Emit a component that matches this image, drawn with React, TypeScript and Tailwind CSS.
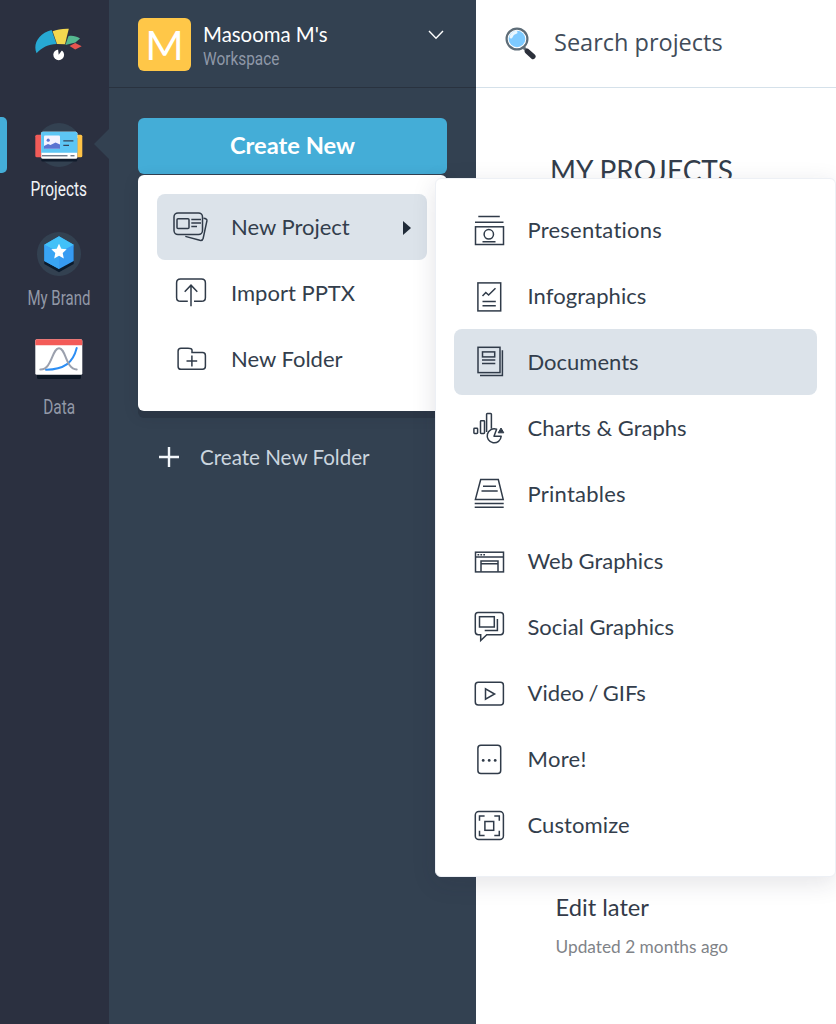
import React from "react";

type IconProps = { children: React.ReactNode };

function LineIcon({ children }: IconProps) {
  return (
    <svg viewBox="0 0 36 36" className="size-9 shrink-0 overflow-visible" fill="none" stroke="#303b49" strokeWidth="1.5">
      {children}
    </svg>
  );
}

const projectTypes: { label: string; active?: boolean; spacing?: string; icon: React.ReactNode }[] = [
  {
    label: "Presentations",
    spacing: "tracking-[0.22px]",
    icon: (
      <>
        <path d="M7.3 4.5H28.8M4 10.2H32.5M11.5 29.7H24.5" />
        <rect x="4.5" y="14.8" width="28" height="17.7" />
        <circle cx="17.8" cy="22.3" r="4.7" />
      </>
    ),
  },
  {
    label: "Infographics",
    spacing: "tracking-[0.08px]",
    icon: (
      <>
        <rect x="6.9" y="4.9" width="22.8" height="28" />
        <path d="M11.5 18L14.8 14.5L17.6 17L24.5 10.3M11.5 23.4H24.8M11.5 27.7H24.8" />
      </>
    ),
  },
  {
    label: "Documents",
    active: true,
    icon: (
      <>
        <rect x="7" y="3.3" width="22" height="25.3" />
        <rect x="11.5" y="7.9" width="12.2" height="5" />
        <path d="M11 16.1H24.3M11 19.6H24.3M31.4 6.3V31.6H9" />
      </>
    ),
  },
  {
    label: "Charts & Graphs",
    icon: (
      <>
        <rect x="2.9" y="18.3" width="3.7" height="5.2" rx="0.7" />
        <rect x="9.5" y="10.8" width="4" height="12.7" rx="0.7" />
        <path d="M15.6 22V4.3Q15.6 3.5 16.4 3.5H19.6Q20.4 3.5 20.4 4.3V18.7" />
        <path d="M25.6 19.2A7 7 0 1 0 30.2 26.3H23L25.6 19.2Z" strokeLinejoin="round" />
        <path d="M30 18L27.2 22.8H32.8Z" fill="#303b49" strokeWidth="1" />
      </>
    ),
  },
  {
    label: "Printables",
    spacing: "tracking-[0.25px]",
    icon: (
      <path d="M9.7 3.6H27.3L32.2 23.4H4.4ZM12 10.3H25M10.5 14.9H26.7M3.7 27.4H32.7M3.7 31.2H32.7" />
    ),
  },
  {
    label: "Web Graphics",
    icon: (
      <>
        <rect x="4.5" y="9.2" width="28" height="19.7" />
        <path d="M4.5 14.1H32.5M10 28.8V18.1H27V28.8M10 20.7H27" />
        <path d="M6.5 11.8H14" strokeDasharray="1.7 1.2" strokeWidth="1.4" />
      </>
    ),
  },
  {
    label: "Social Graphics",
    icon: (
      <>
        <path d="M7 3.4H29.5Q32.4 3.4 32.4 6.3V22.8Q32.4 25.7 29.5 25.7H15.8L9.7 31.6V25.7H7.2Q4.3 25.7 4.3 22.8V6.3Q4.3 3.4 7 3.4Z" />
        <rect x="8.5" y="7.7" width="14.8" height="10.3" />
        <path d="M26.4 10V21.6H13.7" />
      </>
    ),
  },
  {
    label: "Video / GIFs",
    spacing: "[word-spacing:-1.3px]",
    icon: (
      <>
        <rect x="4.3" y="7.2" width="28.1" height="22.7" rx="3" />
        <path d="M14.5 13.8V24.2L23.6 19Z" />
      </>
    ),
  },
  {
    label: "More!",
    spacing: "tracking-[0.3px]",
    icon: (
      <>
        <rect x="6.9" y="4.3" width="22.8" height="28.2" rx="3" />
        <g fill="#303b49" stroke="none">
          <circle cx="12.2" cy="19.4" r="1.4" />
          <circle cx="18.2" cy="19.4" r="1.4" />
          <circle cx="24.2" cy="19.4" r="1.4" />
        </g>
      </>
    ),
  },
  {
    label: "Customize",
    spacing: "tracking-[0.1px]",
    icon: (
      <>
        <rect x="4.3" y="4.5" width="28.1" height="28" rx="3.5" />
        <rect x="13.9" y="14.5" width="8.8" height="8.8" />
        <path d="M8.5 13.8V9H13.6M23.3 9H28.3V13.8M28.3 23.8V28.6H23.3M13.6 28.6H8.5V23.8" />
      </>
    ),
  },
];

function Logo() {
  return (
    <svg viewBox="0 0 50 36" className="h-9 w-[50px]">
      <path d="M2.6 25.2C-1.5 16.5 4.5 5 17.6 1.9L22.6 15.9C14.5 16.2 7.5 19.4 2.6 25.2Z" fill="#27a9d3" />
      <path d="M18.6 3.2C23 1.6 28 .6 34.8 .8L31 16.3L23 15.9Z" fill="#f3d84f" />
      <path d="M34.4 8.2C38 7.1 42.5 8.5 46 10.4L41.4 14.5L31.4 17Z" fill="#55b890" />
      <path d="M35.6 18L41.2 14.9L47.7 18.2L41.2 21.6Z" fill="#e8554f" />
      <circle cx="24.7" cy="26.8" r="5.4" fill="#fff" />
      <path d="M24.7 26.8L24 20.4L28.2 22Z" fill="#2b3040" />
    </svg>
  );
}

function ProjectsIcon() {
  return (
    <svg viewBox="0 0 50 44" className="h-11 w-[50px]">
      <circle cx="25" cy="22" r="22" fill="#334151" />
      <rect x="1.3" y="11.8" width="8" height="22.4" rx="1.5" fill="#f15b58" />
      <rect x="40.7" y="11.8" width="7.6" height="22.4" rx="1.5" fill="#ffc346" />
      <rect x="7.2" y="14" width="36.1" height="24.5" rx="1.5" fill="#101b2b" />
      <rect x="7.2" y="8.8" width="36.1" height="27" rx="1.5" fill="#fff" />
      <path d="M7.2 10.3Q7.2 8.8 8.7 8.8H41.8Q43.3 8.8 43.3 10.3V29.7H7.2Z" fill="#5dc6f5" />
      <rect x="10" y="12.6" width="16" height="13.2" rx="1" fill="#f4f3ff" />
      <circle cx="14.2" cy="17.2" r="1.6" fill="#5b74d1" />
      <path d="M10 23L14 21L16.5 22L21.5 19.5L26 21.5V25.8H10Z" fill="#5b74d1" />
      <path d="M29.3 17.9H39.4M29.3 22.3H35" stroke="#35445a" strokeWidth="1.2" />
      <path d="M8 32.8H33.5M36.5 32.8H40.5" stroke="#35445a" strokeWidth="1" />
    </svg>
  );
}

function BrandIcon() {
  return (
    <svg viewBox="0 0 50 44" className="h-11 w-[50px]">
      <circle cx="25" cy="22" r="22" fill="#334151" />
      <path d="M10.3 15L25 7L39.7 15V32L25 40.3L10.3 32Z" fill="#0b1b2c" />
      <path d="M25 4.3L39.7 12.7V29L25 37L10.3 29V12.7Z" fill="#369bf2" />
      <path d="M25 4.3L39.7 12.7L25 20.6L10.3 12.7Z" fill="#42c1f8" />
      <path d="M10.3 12.7L25 20.6V37L10.3 29Z" fill="#39a5f4" />
      <path d="M25 11.7L27.3 16.7L32.7 17.3L28.7 21L29.8 26.4L25 23.7L20.2 26.4L21.3 21L17.3 17.3L22.7 16.7Z" fill="#fff" />
    </svg>
  );
}

function DataIcon() {
  return (
    <svg viewBox="0 5 50 44" className="h-11 w-[50px] overflow-visible">
      <rect x="3" y="13" width="44" height="30" rx="1.5" fill="#0c1725" />
      <rect x="1.3" y="3.3" width="47" height="35.5" rx="1.5" fill="#fff" />
      <path d="M1.3 4.8Q1.3 3.3 2.8 3.3H46.8Q48.3 3.3 48.3 4.8V9.3H1.3Z" fill="#f35b58" />
      <path d="M12 33.8C30 33.5 39 27 42.7 12" fill="none" stroke="#2c8ef4" strokeWidth="2" strokeLinecap="round" />
      <path d="M6.3 33.5C18 34 18 12.2 25 12.2C32 12.2 31.5 33 42.7 33.5" fill="none" stroke="#9ba0ad" strokeWidth="2" strokeLinecap="round" />
    </svg>
  );
}

const nav = [
  { label: "Projects", icon: <ProjectsIcon />, active: true, text: "scale-x-[0.79]" },
  { label: "My Brand", icon: <BrandIcon />, active: false, text: "scale-x-[0.77]" },
  { label: "Data", icon: <DataIcon />, active: false, text: "scale-x-[0.79]" },
];

function Rail() {
  return (
    <nav className="flex w-[109px] shrink-0 flex-col items-center bg-[#2b3040] pt-7">
      <div className="mr-[-8px] flex h-9 items-start">
        <Logo />
      </div>
      <div className="mt-[53px] flex w-full flex-col">
        {nav.map((item) => (
          <div key={item.label} className="relative flex h-[109px] w-full flex-col items-center pl-[9px] pt-[6px]">
            {item.active && (
              <>
                <span className="absolute left-0 top-0 h-14 w-[7px] rounded-r-[5px] bg-[#44add8]" />
                <svg viewBox="0 0 15 30" className="absolute right-0 top-[12px] h-[30px] w-[15px]">
                  <path d="M15 0L0 15L15 30Z" fill="#334151" />
                </svg>
              </>
            )}
            {item.icon}
            <span
              className={`mt-[9px] inline-block whitespace-nowrap font-['Roboto',sans-serif] text-[19.5px] leading-7 ${item.text} ${
                item.active ? "text-[#f0f3f6]" : "text-[#9298a7]"
              }`}
            >
              {item.label}
            </span>
          </div>
        ))}
      </div>
    </nav>
  );
}

function Flyout() {
  return (
    <div className="absolute left-[297px] top-[60px] z-20 w-[401px] rounded-md border border-[#edf0f5] bg-white p-[18px] shadow-[0_6px_24px_rgba(30,35,60,0.12)]">
      {projectTypes.map((item) => (
        <div
          key={item.label}
          className={`flex h-[66.1px] items-center gap-[20.5px] rounded-lg pl-[17px] text-[22px] text-[#333e4c] ${item.active ? "bg-[#dce3ea]" : ""}`}
        >
          <LineIcon>{item.icon}</LineIcon>
          <span className={`-mt-px ${item.spacing ?? ""}`}>{item.label}</span>
        </div>
      ))}
    </div>
  );
}

function CreateMenu() {
  const row = "flex h-[66px] items-center gap-[21px] rounded-lg pl-[17px] text-[22px] text-[#333e4c]";
  return (
    <div className="absolute left-0 top-[57px] z-10">
      <div className="h-[236px] w-[309px] rounded-md bg-white px-[19px] pt-[19px] shadow-[0_7px_0_#2b3645,0_4px_16px_rgba(20,30,45,0.12)]">
        <div className={`${row} w-[270px] bg-[#dce3ea]`}>
          <LineIcon>
            <rect x="0" y="3.9" width="28.5" height="21.7" rx="4" />
            <rect x="3" y="9.8" width="12" height="9.6" rx="1" />
            <path d="M17.3 10.6H27M17.3 14.1H27M17.3 17.5H23M29.5 9.2Q33.3 9.6 32.9 11.9L29.2 29.2Q28.5 31.9 25.8 31.3L11.3 27.4" />
          </LineIcon>
          <span className="-mt-0.5">New Project</span>
          <svg viewBox="0 0 8 14" className="ml-auto mr-4 mt-0.5 h-3.5 w-2">
            <path d="M0 0L8 7L0 14Z" fill="#202b38" />
          </svg>
        </div>
        <div className={row}>
          <LineIcon>
            <path d="M13.8 26.3H6.5Q2.6 26.3 2.6 22.4V8Q2.6 4.1 6.5 4.1H27.5Q31.4 4.1 31.4 8V22.4Q31.4 26.3 27.5 26.3H20" />
            <path d="M17 31.2V10.2M10.7 16.7L17 10.2L23.3 16.7" />
          </LineIcon>
          <span className="-mt-0.5">Import PPTX</span>
        </div>
        <div className={row}>
          <LineIcon>
            <path d="M7 7.3H14Q17.7 7.3 18 8.8V11.5H28.5Q31.4 11.5 31.4 14.4V25.3Q31.4 28.3 28.5 28.3H7Q4.1 28.3 4.1 25.4V10.2Q4.1 7.3 7 7.3ZM12.5 20H23.2M17.9 14.6V25.4" />
          </LineIcon>
          <span className="-mt-0.5">New Folder</span>
        </div>
      </div>
    </div>
  );
}

function Panel() {
  return (
    <aside className="flex w-[367px] shrink-0 flex-col bg-[#334151]">
      <header className="flex h-[88px] items-start border-b border-[#29323f] pl-[29px] pr-8 pt-[17px]">
        <div className="mt-px flex h-[53px] w-[53px] items-center justify-center rounded-[6px] bg-[#ffc748] text-[41.5px] text-white">
          M
        </div>
        <div className="ml-3 flex flex-col pt-[4px]">
          <span className="text-[20.4px] leading-[26px] text-white">Masooma M's</span>
          <span className="origin-left scale-x-[0.81] font-['Roboto',sans-serif] text-[19px] leading-6 text-[#8f98a8]">
            Workspace
          </span>
        </div>
        <svg viewBox="0 0 16 10" className="ml-auto mt-[13px] h-[10px] w-4" fill="none" stroke="#fff" strokeWidth="1.4">
          <path d="M1 1L8 8.2L15 1" />
        </svg>
      </header>
      <div className="relative mx-[29px] mt-[30px]">
        <button className="flex h-14 w-[309px] items-center justify-center rounded-md bg-[#44add7] text-[23.7px] font-bold text-white">
          Create New
        </button>
        <CreateMenu />
        <Flyout />
      </div>
      <div className="mt-[265px] flex h-9 items-center pl-[50px] text-[20.6px] text-[#cbd5df]">
        <svg viewBox="0 0 20 20" className="mr-[21px] size-5" stroke="#f2f6fa" strokeWidth="2.4">
          <path d="M0 10H20M10 0V20" />
        </svg>
        <span className="mt-px">Create New Folder</span>
      </div>
    </aside>
  );
}

export default function App() {
  return (
    <div className="flex h-screen w-full overflow-hidden bg-white font-['Lato',sans-serif] [font-variant-ligatures:none]">
      <Rail />
      <Panel />
      <main className="flex min-w-0 flex-1 flex-col bg-white">
        <header className="flex h-[88px] items-center border-b border-[#d5e1ea] pl-[29px] font-['Open_Sans',sans-serif] text-[23.5px] text-[#414c5a]">
          <svg viewBox="0 0 32 34" className="mr-[17px] h-[34px] w-8">
            <path d="M18.8 20.8L22.8 24.8" stroke="#626b73" strokeWidth="3" />
            <circle cx="12" cy="12" r="10.4" fill="#fff" stroke="#5e6d78" strokeWidth="2.2" />
            <circle cx="12" cy="12" r="8.3" fill="#7dcaff" />
            <path d="M6 10A7 7 0 0 1 11 5.3" fill="none" stroke="#e8f7ff" strokeWidth="3" strokeLinecap="round" />
            <path d="M22.3 24.3L28 29.5" stroke="#2c303b" strokeWidth="5.2" strokeLinecap="round" />
          </svg>
          <span className="-mt-0.5">Search projects</span>
        </header>
        <h1 className="mt-[64px] whitespace-nowrap pl-[74px] text-[28px] leading-9 text-[#333d4b]">MY PROJECTS</h1>
        <div className="mt-auto pb-[65px] pl-[79.5px]">
          <h2 className="-mt-px text-[23.7px] leading-8 text-[#333b49]">Edit later</h2>
          <p className="mt-[12px] text-[17.3px] leading-6 text-[#7f8388]">Updated 2 months ago</p>
        </div>
      </main>
    </div>
  );
}
